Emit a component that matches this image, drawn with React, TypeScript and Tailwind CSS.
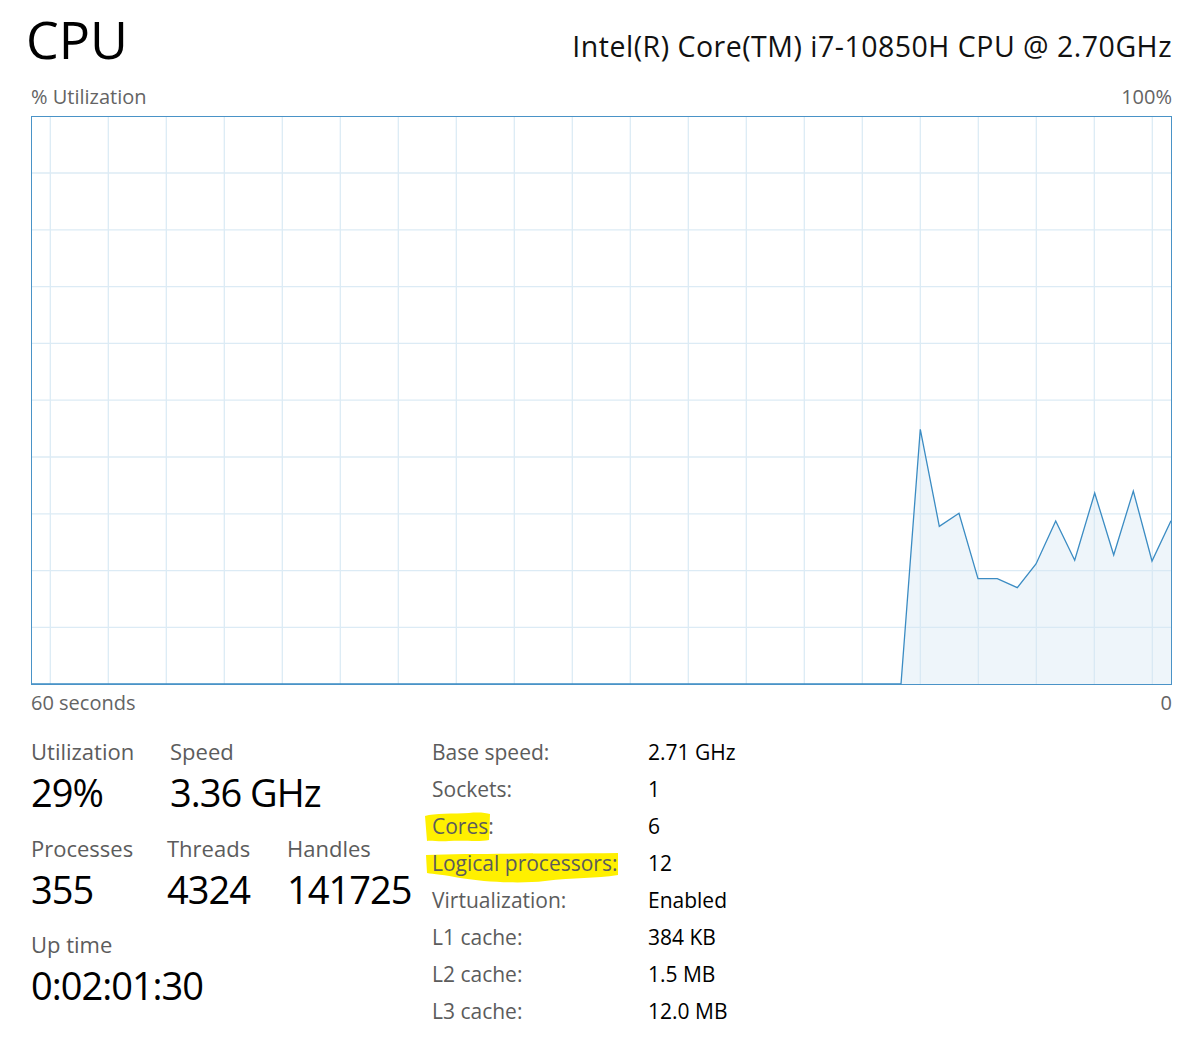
import React from 'react'

const font = { fontFamily: '"Open Sans", "Noto Sans", Arial, sans-serif' }

const vLines = Array.from({ length: 20 }, (_, i) => 18.3 + i * 58)
const hLines = Array.from({ length: 9 }, (_, i) => 56 + i * 56.8)

const points: [number, number][] = [
  [0, 567], [869, 567], [888.3, 312.3], [907.3, 409.3], [927, 396.3], [946, 461.7],
  [965.3, 461.7], [985.3, 470.7], [1004, 447], [1023.7, 404], [1042.7, 443.3],
  [1062.7, 376], [1081.7, 438], [1101.3, 374], [1120, 444], [1139, 403.7],
]

function UtilGraph() {
  const line = points.map(([x, y]) => `${x},${y}`).join(' ')
  const area = `${line} 1139,567 0,567`
  return (
    <div className="ml-[31px] w-[1141px] h-[569px] border border-[#4a93c7]">
      <svg width="1139" height="567" viewBox="0 0 1139 567" className="block">
        {vLines.map((x) => (
          <line key={x} x1={x} y1={0} x2={x} y2={567} stroke="#dcebf5" strokeWidth="1.3" />
        ))}
        {hLines.map((y) => (
          <line key={y} x1={0} y1={y} x2={1139} y2={y} stroke="#dcebf5" strokeWidth="1.3" />
        ))}
        <polygon points={area} fill="#d5e6f2" fillOpacity="0.4" />
        <polyline points={line} fill="none" stroke="#3b8cc3" strokeWidth="1.3" strokeLinejoin="miter" />
      </svg>
    </div>
  )
}

function Stat({ label, value, width }: { label: string; value: string; width?: string }) {
  return (
    <div className={width}>
      <div className="text-[22px] leading-[30px] text-[#5c5c5c]">{label}</div>
      <div className="text-[38px] leading-[46px] mt-[3px] text-black tracking-[-1px]">{value}</div>
    </div>
  )
}

// yellow marker stroke behind a word
function Marked({ children, blob }: { children: React.ReactNode; blob: 'short' | 'long' }) {
  return (
    <span className="relative inline-block">
      {blob === 'short' ? (
        <svg className="absolute left-[-8px] right-[0px] top-[4px] h-[30px]" viewBox="0 0 66 30" preserveAspectRatio="none">
          <path d="M1 4 C10 1 30 2 45 1 C55 0 62 1 66 2 L65 28 C55 30 40 28 25 29 C15 30 6 28 3 29 Z" fill="#fff000" />
        </svg>
      ) : (
        <svg className="absolute left-[-7px] right-[0px] top-[8px] h-[30px]" viewBox="0 0 193 30" preserveAspectRatio="none">
          <path d="M1 2 C50 0 120 1 193 0 L193 22 C170 26 150 24 120 28 C95 31 60 29 35 25 C20 22 8 21 2 20 Z" fill="#fff000" />
        </svg>
      )}
      <span className="relative">{children}</span>
    </span>
  )
}

const colon = <span className="relative">:</span>

const specs: [React.ReactNode, string][] = [
  ['Base speed:', '2.71 GHz'],
  ['Sockets:', '1'],
  [<><Marked blob="short">Cores</Marked>{colon}</>, '6'],
  [<><Marked blob="long">Logical processors</Marked>{colon}</>, '12'],
  ['Virtualization:', 'Enabled'],
  ['L1 cache:', '384 KB'],
  ['L2 cache:', '1.5 MB'],
  ['L3 cache:', '12.0 MB'],
]

export default function App() {
  return (
    <div className="w-[1200px] h-[1049px] bg-white overflow-hidden" style={font}>
      <div className="flex items-end justify-between pl-[26px] pr-[28px] pt-[12px]">
        <h1 className="text-[52px] leading-[54px] text-black">CPU</h1>
        <div className="text-[28.5px] leading-[34px] tracking-[0.5px] text-[#111] mb-[3px]">Intel(R) Core(TM) i7-10850H CPU @ 2.70GHz</div>
      </div>

      <div className="flex justify-between pl-[31px] pr-[28px] mt-[17px] text-[20px] leading-[28px] text-[#646464]">
        <span>% Utilization</span>
        <span>100%</span>
      </div>

      <div className="mt-[5px]">
        <UtilGraph />
      </div>

      <div className="flex justify-between pl-[31px] pr-[28px] mt-[4px] text-[20px] leading-[28px] text-[#646464]">
        <span>60 seconds</span>
        <span>0</span>
      </div>

      <div className="flex mt-[19px] pl-[31px]">
        <div className="w-[401px]">
          <div className="flex">
            <Stat label="Utilization" value="29%" width="w-[139px]" />
            <Stat label="Speed" value="3.36 GHz" />
          </div>
          <div className="flex mt-[18px]">
            <Stat label="Processes" value="355" width="w-[136px]" />
            <Stat label="Threads" value="4324" width="w-[120px]" />
            <Stat label="Handles" value="141725" />
          </div>
          <div className="mt-[17px]">
            <Stat label="Up time" value="0:02:01:30" />
          </div>
        </div>

        <div className="-mt-[2px] text-[21px]">
          {specs.map(([label, value], i) => (
            <div key={i} className="flex h-[37px] leading-[37px] whitespace-nowrap">
              <div className="w-[216px] text-[#5c5c5c]">{label}</div>
              <div className="text-black">{value}</div>
            </div>
          ))}
        </div>
      </div>
    </div>
  )
}
